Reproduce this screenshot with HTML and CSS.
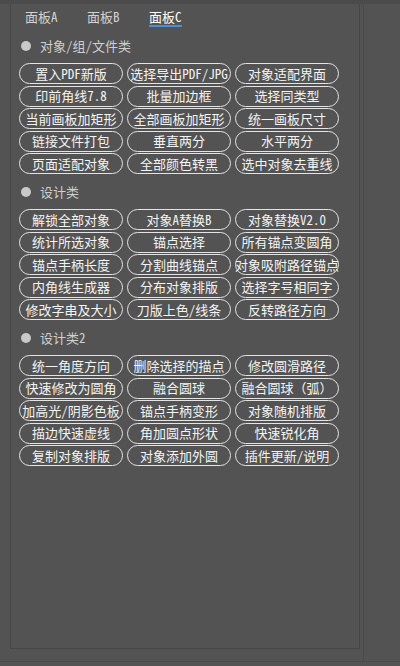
FILE: index.html
```html
<!DOCTYPE html>
<html lang="zh">
<head>
<meta charset="utf-8">
<link rel="stylesheet" href="styles.css">
</head>
<body>
<div class="window">
  <div class="panel">
    <div class="tabs">
      <span class="tab">面板A</span>
      <span class="tab">面板B</span>
      <span class="tab active">面板C</span>
    </div>

    <div class="heading"><span class="dot"></span>对象/组/文件类</div>
    <div class="grid">
      <div class="btn">置入PDF新版</div>
      <div class="btn">选择导出PDF/JPG</div>
      <div class="btn">对象适配界面</div>
      <div class="btn">印前角线7.8</div>
      <div class="btn">批量加边框</div>
      <div class="btn">选择同类型</div>
      <div class="btn">当前画板加矩形</div>
      <div class="btn">全部画板加矩形</div>
      <div class="btn">统一画板尺寸</div>
      <div class="btn">链接文件打包</div>
      <div class="btn">垂直两分</div>
      <div class="btn">水平两分</div>
      <div class="btn">页面适配对象</div>
      <div class="btn">全部颜色转黑</div>
      <div class="btn">选中对象去重线</div>
    </div>

    <div class="heading"><span class="dot"></span>设计类</div>
    <div class="grid">
      <div class="btn">解锁全部对象</div>
      <div class="btn">对象A替换B</div>
      <div class="btn">对象替换V2.0</div>
      <div class="btn">统计所选对象</div>
      <div class="btn">锚点选择</div>
      <div class="btn">所有锚点变圆角</div>
      <div class="btn">锚点手柄长度</div>
      <div class="btn">分割曲线锚点</div>
      <div class="btn">对象吸附路径锚点</div>
      <div class="btn">内角线生成器</div>
      <div class="btn">分布对象排版</div>
      <div class="btn">选择字号相同字</div>
      <div class="btn">修改字串及大小</div>
      <div class="btn">刀版上色/线条</div>
      <div class="btn">反转路径方向</div>
    </div>

    <div class="heading"><span class="dot"></span>设计类2</div>
    <div class="grid">
      <div class="btn">统一角度方向</div>
      <div class="btn">删除选择的描点</div>
      <div class="btn">修改圆滑路径</div>
      <div class="btn">快速修改为圆角</div>
      <div class="btn">融合圆球</div>
      <div class="btn">融合圆球<span class="fw">（弧）</span></div>
      <div class="btn">加高光/阴影色板</div>
      <div class="btn">锚点手柄变形</div>
      <div class="btn">对象随机排版</div>
      <div class="btn">描边快速虚线</div>
      <div class="btn">角加圆点形状</div>
      <div class="btn">快速锐化角</div>
      <div class="btn">复制对象排版</div>
      <div class="btn">对象添加外圆</div>
      <div class="btn">插件更新/说明</div>
    </div>
  </div>
  <div class="side"></div>
</div>
</body>
</html>
```

FILE: styles.css
```css
html, body {
  margin: 0;
  padding: 0;
}
body {
  background: #535353;
  font-family: "Noto Sans CJK SC", "Noto Sans", sans-serif;
  font-feature-settings: "hwid";
  font-size: 13px;
  color: #f2f2f2;
  width: 400px;
  height: 666px;
  overflow: hidden;
}
.window {
  display: flex;
  height: 662px;
  border-top: 4px solid #4b4b4b;
  padding-left: 10px;
  box-sizing: border-box;
  border-bottom: 1px solid #4a4a4a;
}
.panel {
  width: 350px;
  height: 645px;
  border-left: 1px solid #474747;
  border-right: 1px solid #474747;
  border-bottom: 1px solid #474747;
  padding-left: 8px;
  box-sizing: border-box;
}
.side {
  width: 3px;
  height: 100%;
  border-right: 1px solid #4a4a4a;
}
.tabs {
  display: flex;
  gap: 29.5px;
  padding-left: 6px;
  padding-top: 5px;
  height: 23px;
  box-sizing: border-box;
}
.tab {
  color: #d2d2d2;
  line-height: 15px;
  height: 16px;
  font-size: 13px;
}
.tab.active {
  color: #ffffff;
  border-bottom: 2px solid #4a90d9;
}
.heading {
  display: flex;
  align-items: center;
  gap: 9px;
  height: 16px;
  line-height: 16px;
  color: #cfcfcf;
  margin-top: 11px;
  margin-left: 2px;
}
.grid + .heading {
  margin-top: 10px;
}
.dot {
  width: 10px;
  height: 10px;
  border-radius: 50%;
  background: #c9c9c9;
}
.grid {
  display: grid;
  grid-template-columns: 104px 104px 104px;
  grid-auto-rows: 21px;
  column-gap: 4px;
  row-gap: 1.5px;
  margin-top: 9px;
}
.btn {
  border: 1.5px solid #e4e4e4;
  border-radius: 11px;
  box-sizing: border-box;
  display: flex;
  align-items: center;
  justify-content: center;
  white-space: nowrap;
  color: #f4f4f4;
  font-size: 13px;
  line-height: 16px;
  overflow: visible;
}
.fw {
  font-feature-settings: normal;
}
```
